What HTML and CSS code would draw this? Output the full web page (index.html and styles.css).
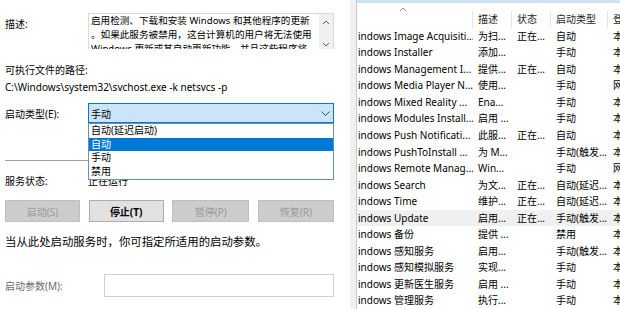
FILE: index.html
```html
<!DOCTYPE html>
<html lang="zh-CN">
<head>
    <meta charset="UTF-8">
    <title>Windows Update 属性</title>
    <link rel="stylesheet" href="styles.css">
</head>
<body>
    <div class="props">
        <div class="row desc-row">
            <span class="label desc-label">描述:</span>
            <div class="desc-box">
                <div class="desc-text">
                    <div>启用检测、下载和安装 Windows 和其他程序的更新</div>
                    <div>。如果此服务被禁用，这台计算机的用户将无法使用</div>
                    <div>Windows 更新或其自动更新功能，并且这些程序将</div>
                </div>
                <div class="vscroll">
                    <svg width="8" height="5" viewBox="0 0 8 5"><path d="M1 4 L4 1 L7 4" fill="none" stroke="#606060"/></svg>
                    <svg width="8" height="5" viewBox="0 0 8 5"><path d="M1 1 L4 4 L7 1" fill="none" stroke="#606060"/></svg>
                </div>
            </div>
        </div>

        <div class="path-label">可执行文件的路径:</div>
        <div class="path">C:\Windows\system32\svchost.exe -k netsvcs -p</div>

        <div class="row combo-row">
            <span class="label">启动类型(E):</span>
            <div class="combo-wrap">
                <div class="combo">
                    <span>手动</span>
                    <svg width="9" height="5" viewBox="0 0 9 5"><path d="M0.5 0.5 L4.5 4.5 L8.5 0.5" fill="none" stroke="#444" stroke-width="1"/></svg>
                </div>
                <ul class="dropdown">
                    <li>自动(延迟启动)</li>
                    <li class="selected">自动</li>
                    <li>手动</li>
                    <li>禁用</li>
                </ul>
            </div>
        </div>

        <hr class="sep">

        <div class="row status-row">
            <span class="label">服务状态:</span>
            <span>正在运行</span>
        </div>

        <div class="buttons">
            <button class="btn" disabled>启动(S)</button>
            <button class="btn active">停止(T)</button>
            <button class="btn" disabled>暂停(P)</button>
            <button class="btn" disabled>恢复(R)</button>
        </div>

        <div class="hint">当从此处启动服务时，你可指定所适用的启动参数。</div>

        <div class="row param-row">
            <span class="label muted">启动参数(M):</span>
            <div class="param-input"></div>
        </div>
    </div>

    <div class="splitter"></div>

    <div class="services">
        <div class="top-strip"></div>
        <div class="list-head">
            <div class="hcell name-col">
                <svg class="sort" width="8" height="5" viewBox="0 0 8 5"><path d="M1 4 L4 1 L7 4" fill="none" stroke="#8a8a8a"/></svg>
            </div>
            <div class="hcell">描述</div>
            <div class="hcell">状态</div>
            <div class="hcell">启动类型</div>
            <div class="hcell last">登</div>
        </div>
        <div class="list">
            <div class="item"><span>indows Image Acquisiti...</span><span>为扫...</span><span>正在...</span><span>自动</span><span>本</span></div>
            <div class="item"><span>indows Installer</span><span>添加...</span><span></span><span>手动</span><span>本</span></div>
            <div class="item"><span>indows Management I...</span><span>提供...</span><span>正在...</span><span>自动</span><span>本</span></div>
            <div class="item"><span>indows Media Player N...</span><span>使用...</span><span></span><span>手动</span><span>网</span></div>
            <div class="item"><span>indows Mixed Reality ...</span><span>Ena...</span><span></span><span>手动</span><span>本</span></div>
            <div class="item"><span>indows Modules Install...</span><span>启用 ...</span><span></span><span>手动</span><span>本</span></div>
            <div class="item"><span>indows Push Notificati...</span><span>此服...</span><span>正在...</span><span>自动</span><span>本</span></div>
            <div class="item"><span>indows PushToInstall ...</span><span>为 M...</span><span></span><span>手动(触发...</span><span>本</span></div>
            <div class="item"><span>indows Remote Manag...</span><span>Win...</span><span></span><span>手动</span><span>网</span></div>
            <div class="item"><span>indows Search</span><span>为文...</span><span>正在...</span><span>自动(延迟...</span><span>本</span></div>
            <div class="item"><span>indows Time</span><span>维护...</span><span>正在...</span><span>自动(延迟...</span><span>本</span></div>
            <div class="item hover"><span>indows Update</span><span>启用...</span><span>正在...</span><span>手动(触发...</span><span>本</span></div>
            <div class="item"><span>indows 备份</span><span>提供 ...</span><span></span><span>禁用</span><span>本</span></div>
            <div class="item"><span>indows 感知服务</span><span>启用...</span><span></span><span>手动(触发...</span><span>本</span></div>
            <div class="item"><span>indows 感知模拟服务</span><span>实现...</span><span></span><span>手动</span><span>本</span></div>
            <div class="item"><span>indows 更新医生服务</span><span>启用 ...</span><span></span><span>手动</span><span>本</span></div>
            <div class="item"><span>indows 管理服务</span><span>执行...</span><span></span><span>手动</span><span>本</span></div>
        </div>
    </div>
</body>
</html>
```

FILE: styles.css
```css
html, body {
    margin: 0;
    height: 309px;
    overflow: hidden;
}
body {
    display: flex;
    width: 620px;
    background: #fff;
    font-family: "Noto Sans", "Noto Sans CJK SC", sans-serif;
    font-size: 10px;
    color: #000;
}

/* left: service properties */
.props {
    width: 329px;
    padding: 0 16px 0 5px;
    display: flex;
    flex-direction: column;
}
.row {
    display: grid;
    grid-template-columns: 83px 1fr;
    align-items: center;
}
.label {
    white-space: nowrap;
}
.muted {
    color: #6d6d6d;
}
.desc-row {
    margin-top: 13px;
    align-items: start;
}
.desc-label {
    padding-top: 3px;
    line-height: 16px;
}
.desc-box {
    display: flex;
    height: 35px;
    border: 1px solid #d9d9d9;
    border-bottom: none;
    overflow: hidden;
}
.desc-text {
    flex: 1;
    padding: 0 2px;
    font-size: 9.6px;
    line-height: 14px;
    white-space: nowrap;
    overflow: hidden;
}
.vscroll {
    width: 14px;
    background: #f0f0f0;
    display: flex;
    flex-direction: column;
    justify-content: space-between;
    align-items: center;
    padding: 6px 0 2px;
}
.path-label {
    margin-top: 13px;
    line-height: 16px;
}
.path {
    margin-top: 1px;
    line-height: 16px;
    white-space: nowrap;
}
.combo-row {
    margin-top: 8px;
}
.combo-wrap {
    position: relative;
}
.combo {
    height: 18px;
    border: 1px solid #0078d7;
    background: #cce4f7;
    display: flex;
    align-items: center;
    justify-content: space-between;
    padding: 0 3px 0 2px;
}
.dropdown {
    position: absolute;
    left: 0;
    right: 0;
    top: 20px;
    margin: 0;
    padding: 0;
    list-style: none;
    background: #fff;
    border: 1px solid #6f8db0;
    z-index: 2;
}
.dropdown li {
    height: 13.7px;
    line-height: 13.7px;
    padding-left: 2px;
}
.dropdown .selected {
    background: #0078d7;
    color: #fff;
}
.sep {
    margin: 37px 0 0;
    border: none;
    border-top: 1px solid #a0a0a0;
}
.status-row {
    margin-top: 12px;
    line-height: 16px;
}
.buttons {
    margin-top: 11px;
    display: grid;
    grid-template-columns: 75px 75px 77px 76px;
    column-gap: 8px;
    justify-content: space-between;
}
.btn {
    height: 22px;
    font: inherit;
    border: 1px solid #bfbfbf;
    background: #cccccc;
    color: #9a9a9a;
    padding: 0;
}
.btn.active {
    background: #e1e1e1;
    border-color: #adadad;
    color: #000;
    font-weight: bold;
}
.hint {
    margin-top: 12px;
    line-height: 16px;
    font-size: 11.4px;
    white-space: nowrap;
}
.param-row {
    margin-top: 24px;
    grid-template-columns: 99px 1fr;
}
.param-input {
    height: 21px;
    border: 1px solid #d0d0d0;
}

/* splitter between panes */
.splitter {
    width: 6px;
    background: #f0f0f0;
    border-right: 1px solid #c9c9c9;
}

/* right: services list */
.services {
    flex: 1;
    display: flex;
    flex-direction: column;
    min-width: 0;
}
.top-strip {
    height: 3px;
    background: #cfe2f5;
}
.list-head {
    height: 28px;
    display: grid;
    grid-template-columns: 116px 39px 39px 57px 1fr;
    align-items: end;
}
.hcell {
    height: 17px;
    line-height: 17px;
    padding-left: 5px;
    border-right: 1px solid #e5e5e5;
    color: #1e1e1e;
    white-space: nowrap;
    overflow: hidden;
}
.hcell.last {
    border-right: none;
}
.name-col {
    position: relative;
    overflow: visible;
}
.sort {
    position: absolute;
    left: 42px;
    top: -4px;
}
.item {
    height: 16.56px;
    line-height: 16.56px;
    display: grid;
    grid-template-columns: 116px 39px 39px 57px 1fr;
    white-space: nowrap;
}
.item span {
    overflow: hidden;
    padding-left: 5px;
}
.item span:first-child {
    padding-left: 1px;
}
.item.hover {
    background: #f0f0f0;
}
```
